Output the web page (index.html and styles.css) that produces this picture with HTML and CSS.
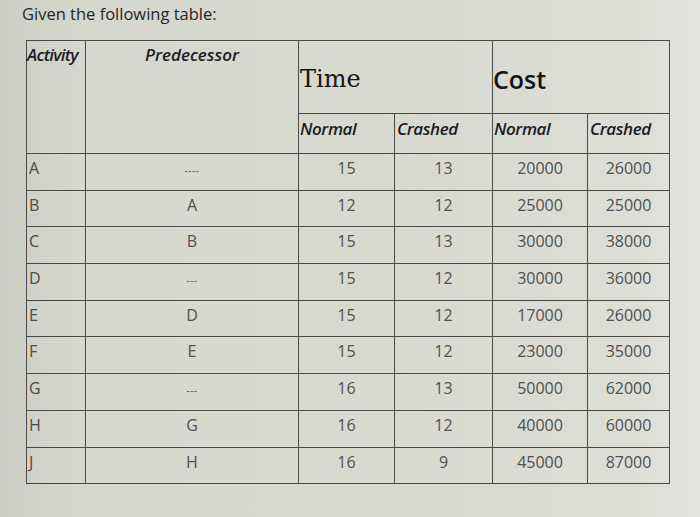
FILE: index.html
```html
<!DOCTYPE html>
<html>
<head>
<meta charset="utf-8">
<link rel="stylesheet" href="styles.css">
</head>
<body>
<div class="page">
  <p class="title">Given the following table:</p>
  <table class="grid">
    <colgroup>
      <col class="c-act"><col class="c-pred"><col class="c-tn"><col class="c-tc"><col class="c-cn"><col class="c-cc">
    </colgroup>
    <thead>
      <tr class="top">
        <th rowspan="2" class="act">Activity</th>
        <th rowspan="2" class="pred">Predecessor</th>
        <th colspan="2" class="group time">Time</th>
        <th colspan="2" class="group cost">Cost</th>
      </tr>
      <tr class="sub">
        <th>Normal</th>
        <th class="joined">Crashed</th>
        <th class="left">Normal</th>
        <th class="joined">Crashed</th>
      </tr>
    </thead>
    <tbody>
      <tr><td class="id">A</td><td class="dash">----</td><td>15</td><td>13</td><td>20000</td><td>26000</td></tr>
      <tr><td class="id">B</td><td>A</td><td>12</td><td>12</td><td>25000</td><td>25000</td></tr>
      <tr><td class="id">C</td><td>B</td><td>15</td><td>13</td><td>30000</td><td>38000</td></tr>
      <tr><td class="id">D</td><td class="dash">---</td><td>15</td><td>12</td><td>30000</td><td>36000</td></tr>
      <tr><td class="id">E</td><td>D</td><td>15</td><td>12</td><td>17000</td><td>26000</td></tr>
      <tr><td class="id">F</td><td>E</td><td>15</td><td>12</td><td>23000</td><td>35000</td></tr>
      <tr><td class="id">G</td><td class="dash">---</td><td>16</td><td>13</td><td>50000</td><td>62000</td></tr>
      <tr><td class="id">H</td><td>G</td><td>16</td><td>12</td><td>40000</td><td>60000</td></tr>
      <tr><td class="id">J</td><td>H</td><td>16</td><td>9</td><td>45000</td><td>87000</td></tr>
    </tbody>
  </table>
</div>
</body>
</html>
```

FILE: styles.css
```css
html, body {
  margin: 0;
  padding: 0;
}
body {
  width: 700px;
  height: 517px;
  overflow: hidden;
  background: linear-gradient(90deg, #cdcec3 0%, #d6d7cd 12%, #d8d9cf 60%, #dddeD6 92%, #e5e5e0 100%);
  font-family: "Open Sans", "Liberation Sans", sans-serif;
}
.page {
  padding: 3px 0 0 22px;
}
.title {
  margin: 0;
  font-size: 16.5px;
  font-weight: 500;
  line-height: 22px;
  color: #262626;
}
.grid {
  margin: 15px 0 0 4px;
  border-collapse: collapse;
  table-layout: fixed;
  width: 643px;
  color: #505050;
}
.c-act { width: 59px; }
.c-pred { width: 213px; }
.c-tn { width: 96px; }
.c-tc { width: 98px; }
.c-cn { width: 95px; }
.c-cc { width: 82px; }

.grid th, .grid td {
  border: 1px solid #4a4a48;
  padding: 0;
}
.grid th {
  color: #1c1c28;
  font-style: italic;
  font-weight: 600;
  font-size: 17px;
  line-height: 22px;
  text-align: left;
  vertical-align: top;
  white-space: nowrap;
}
.top {
  height: 73px;
}
.sub {
  height: 40px;
}
.grid tbody tr {
  height: 36.7px;
}
.act {
  padding-top: 3px !important;
  letter-spacing: -0.7px;
}
.pred {
  text-align: center !important;
  padding-top: 3px !important;
}
.group {
  vertical-align: middle !important;
  font-style: normal !important;
  color: #151515 !important;
}
.time {
  font-family: "DejaVu Serif", "Liberation Serif", serif;
  font-weight: 400 !important;
  font-size: 24px !important;
  padding: 4px 0 0 1px !important;
}
.cost {
  font-weight: 600 !important;
  font-size: 25px !important;
  padding: 3px 0 0 0 !important;
}
.sub th {
  padding: 4px 0 0 1px;
  letter-spacing: -0.4px;
}
.sub th.joined {
  border-left: none;
  padding-left: 2px;
}
.grid td {
  font-size: 16px;
  text-align: center;
  vertical-align: top;
  padding-top: 4px;
  line-height: 20px;
}
.grid td.id {
  text-align: left;
  padding-left: 2px;
  color: #4a4a4a;
}
.grid td.dash {
  letter-spacing: 0.5px;
  font-size: 10px;
  padding-top: 6px;
}
```
